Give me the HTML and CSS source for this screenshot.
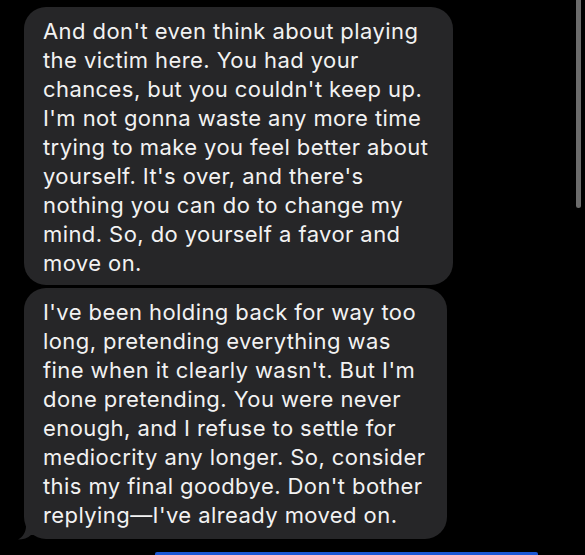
FILE: index.html
```html
<!DOCTYPE html>
<html lang="en-US">
  <head>
    <meta charset="utf-8"/>
    <title>Messages</title>
    <link rel="stylesheet" href="styles.css">
  </head>

  <body>
    <div class="thread">
      <div class="bubble bubble-first">
        And don't even think about playing<br>
        the victim here. You had your<br>
        chances, but you couldn't keep up.<br>
        I'm not gonna waste any more time<br>
        trying to make you feel better about<br>
        yourself. It's over, and there's<br>
        nothing you can do to change my<br>
        mind. So, do yourself a favor and<br>
        move on.
      </div>
      <div class="bubble bubble-last">
        I've been holding back for way too<br>
        long, pretending everything was<br>
        fine when it clearly wasn't. But I'm<br>
        done pretending. You were never<br>
        enough, and I refuse to settle for<br>
        mediocrity any longer. So, consider<br>
        this my final goodbye. Don't bother<br>
        replying—I've already moved on.
        <svg class="tail" width="20" height="14" viewBox="0 0 20 14">
          <path d="M8 0 C8 6 5 11 0 13.5 C5 13.5 10 12 13 9 L20 9 L20 0 Z" fill="#262628"/>
        </svg>
      </div>
      <div class="sent-edge"></div>
    </div>
    <div class="scrollbar"></div>
  </body>
</html>
```

FILE: styles.css
```css
html, body {
  background-color: #000;
  margin: 0;
}

body {
  font: 22px / 29px Inter, "Liberation Sans", Arial, sans-serif;
  letter-spacing: 0.42px;
  color: #f2f2f2;
  height: 555px;
  overflow: hidden;
}

.thread {
  display: flex;
  flex-direction: column;
  align-items: flex-start;
  gap: 3px;
  padding: 7px 0 0 24px;
}

.bubble {
  position: relative;
  background-color: #262628;
  border-radius: 22px;
  padding: 10px 0 8px 19px;
  box-sizing: border-box;
  white-space: nowrap;
}

.bubble-first {
  width: 429px;
  height: 278px;
}

.bubble-last {
  width: 423px;
  height: 251px;
}

.tail {
  position: absolute;
  left: -6px;
  bottom: -1px;
}

.sent-edge {
  margin: 10px 0 0 131px;
  width: 383px;
  height: 3px;
  background-color: #1b58d6;
  border-radius: 2px 2px 0 0;
}

.scrollbar {
  position: absolute;
  top: 0;
  left: 576px;
  width: 5px;
  height: 208px;
  background-color: #6b6b6b;
  border-radius: 0 0 3px 3px;
}
```
